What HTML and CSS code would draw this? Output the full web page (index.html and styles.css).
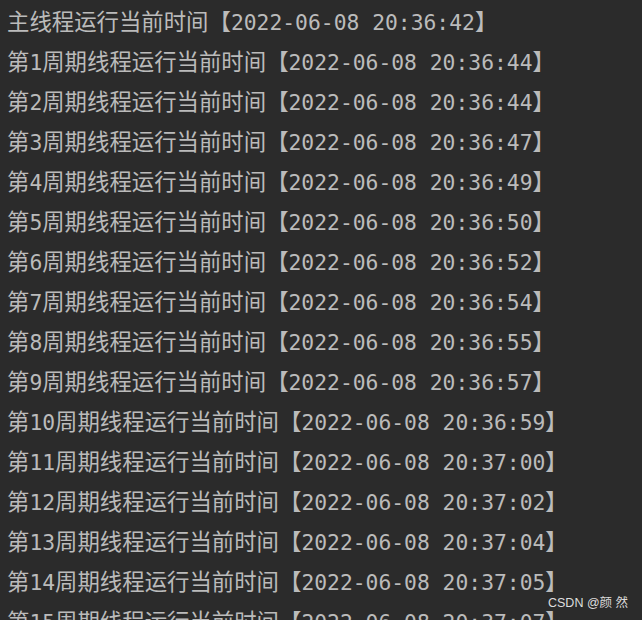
FILE: index.html
```html
<!DOCTYPE html>
<html lang="zh">
<head>
<meta charset="utf-8">
<link rel="stylesheet" href="styles.css">
</head>
<body>
<div class="console">
<div class="line"><span class="zh">主线程运行当前时间【</span>2022-06-08 20:36:42<span class="zh">】</span></div>
<div class="line"><span class="zh">第</span>1<span class="zh">周期线程运行当前时间【</span>2022-06-08 20:36:44<span class="zh">】</span></div>
<div class="line"><span class="zh">第</span>2<span class="zh">周期线程运行当前时间【</span>2022-06-08 20:36:44<span class="zh">】</span></div>
<div class="line"><span class="zh">第</span>3<span class="zh">周期线程运行当前时间【</span>2022-06-08 20:36:47<span class="zh">】</span></div>
<div class="line"><span class="zh">第</span>4<span class="zh">周期线程运行当前时间【</span>2022-06-08 20:36:49<span class="zh">】</span></div>
<div class="line"><span class="zh">第</span>5<span class="zh">周期线程运行当前时间【</span>2022-06-08 20:36:50<span class="zh">】</span></div>
<div class="line"><span class="zh">第</span>6<span class="zh">周期线程运行当前时间【</span>2022-06-08 20:36:52<span class="zh">】</span></div>
<div class="line"><span class="zh">第</span>7<span class="zh">周期线程运行当前时间【</span>2022-06-08 20:36:54<span class="zh">】</span></div>
<div class="line"><span class="zh">第</span>8<span class="zh">周期线程运行当前时间【</span>2022-06-08 20:36:55<span class="zh">】</span></div>
<div class="line"><span class="zh">第</span>9<span class="zh">周期线程运行当前时间【</span>2022-06-08 20:36:57<span class="zh">】</span></div>
<div class="line"><span class="zh">第</span>10<span class="zh">周期线程运行当前时间【</span>2022-06-08 20:36:59<span class="zh">】</span></div>
<div class="line"><span class="zh">第</span>11<span class="zh">周期线程运行当前时间【</span>2022-06-08 20:37:00<span class="zh">】</span></div>
<div class="line"><span class="zh">第</span>12<span class="zh">周期线程运行当前时间【</span>2022-06-08 20:37:02<span class="zh">】</span></div>
<div class="line"><span class="zh">第</span>13<span class="zh">周期线程运行当前时间【</span>2022-06-08 20:37:04<span class="zh">】</span></div>
<div class="line"><span class="zh">第</span>14<span class="zh">周期线程运行当前时间【</span>2022-06-08 20:37:05<span class="zh">】</span></div>
<div class="line"><span class="zh">第</span>15<span class="zh">周期线程运行当前时间【</span>2022-06-08 20:37:07<span class="zh">】</span></div>
</div>
<div class="watermark">CSDN @颜 然</div>
</body>
</html>
```
FILE: styles.css
```css
html, body {
  margin: 0;
  padding: 0;
  background: #2b2b2b;
  width: 642px;
  height: 620px;
  overflow: hidden;
}
body {
  position: relative;
}
.console {
  padding: 0 0 0 7px;
  font-family: "DejaVu Sans Mono", "Noto Sans CJK SC", monospace;
  font-size: 21.33px;
  line-height: 40px;
  color: #bbbbbb;
}
.line {
  white-space: pre;
  height: 40px;
}
.zh {
  font-family: "Noto Sans CJK SC", sans-serif;
  font-size: 22.4px;
}
.watermark {
  position: absolute;
  left: 548px;
  top: 594px;
  font-family: "Liberation Sans", "Noto Sans CJK SC", sans-serif;
  font-size: 12.5px;
  line-height: 18px;
  color: rgba(255, 255, 255, 0.85);
  white-space: pre;
}
```
